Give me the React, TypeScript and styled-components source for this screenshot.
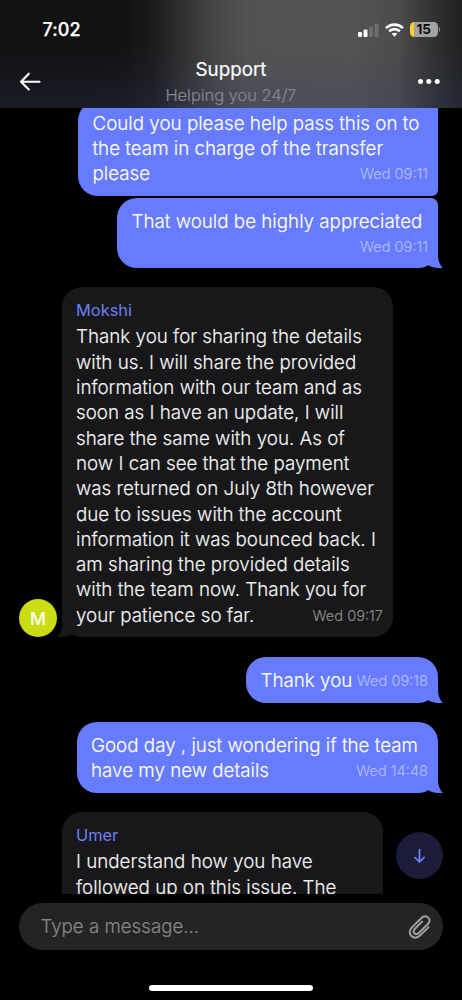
import React from "react";
import styled, { createGlobalStyle, css } from "styled-components";

const Global = createGlobalStyle`
  * { box-sizing: border-box; }
  html, body { margin: 0; background: #000; }
  body { font-family: Inter, "Liberation Sans", sans-serif; overflow: hidden; }
`;

const Screen = styled.main`
  width: 462px;
  height: 1000px;
  background: #000;
  color: #fff;
  display: flex;
  flex-direction: column;
  overflow: hidden;
`;

const Header = styled.header`
  flex: none;
  height: 108px;
  background:
    linear-gradient(180deg, rgba(50, 62, 110, 0) 45%, rgba(50, 62, 110, 0.24) 100%),
    linear-gradient(90deg, #111112 0%, #121213 26%, #1b1b1c 33%, #323232 40%, #484848 47%, #525252 54%, #535353 76%, #4c4c4c 86%, #303132 94%, #202122 100%);
`;

const StatusBar = styled.div`
  height: 58px;
  padding: 1px 22px 0 42.5px;
  display: flex;
  align-items: center;
  justify-content: space-between;
`;

const Clock = styled.span`
  font-size: 18px;
  font-weight: 500;
  -webkit-text-stroke: 0.25px currentColor;
  line-height: 22px;
  letter-spacing: 0.1px;
`;

const StatusIcons = styled.div`
  display: flex;
  align-items: center;
  gap: 6.2px;
  svg { display: block; }
`;

const Battery = styled.div`
  display: flex;
  align-items: center;
  gap: 1px;
  &::after {
    content: "";
    width: 1.5px;
    height: 5px;
    border-radius: 0 2px 2px 0;
    background: #8c8c8c;
  }
`;

const BatteryBody = styled.div`
  width: 27.5px;
  height: 15px;
  border-radius: 4.5px;
  background: linear-gradient(90deg, #fbd02c 0 4.5px, #a3a3a3 4.5px);
  color: #0b0b0b;
  font-size: 13.5px;
  font-weight: 700;
  line-height: 15.5px;
  text-align: center;
`;

const NavBar = styled.div`
  height: 50px;
  padding: 0 22px 0 19px;
  display: grid;
  grid-template-columns: 24px 1fr 24px;
  svg { display: block; margin-top: 12px; }
`;

const Titles = styled.div`
  text-align: center;
  padding-left: 3px;
`;

const Title = styled.h1`
  margin: 0;
  font-size: 18.8px;
  font-weight: 400;
  -webkit-text-stroke: 0.2px currentColor;
  line-height: 24px;
`;

const Subtitle = styled.p`
  margin: 1px 0 0;
  font-size: 16.5px;
  font-weight: 300;
  -webkit-text-stroke: 0.2px currentColor;
  line-height: 24px;
  letter-spacing: -0.05px;
  color: #85868c;
`;

const Thread = styled.section`
  flex: none;
  height: 785.5px;
  overflow: hidden;
  padding: 0 24px 0 19px;
  display: flex;
  flex-direction: column;
`;

const Row = styled.div<{ $mine?: boolean; $gap: number }>`
  flex: none;
  display: flex;
  align-items: flex-end;
  justify-content: ${(p) => (p.$mine ? "flex-end" : "flex-start")};
  margin-top: ${(p) => p.$gap}px;
`;

const AvatarSlot = styled.div`
  width: 43px;
  flex: none;
`;

const Avatar = styled.div`
  width: 38px;
  height: 38px;
  border-radius: 50%;
  background: #cbdc12;
  font-size: 17.5px;
  font-weight: 500;
  line-height: 39px;
  text-align: center;
`;

const Bubble = styled.div<{ $mine?: boolean; $w: number; $h: number; $radius: string; $top?: number }>`
  position: relative;
  isolation: isolate;
  width: ${(p) => p.$w}px;
  height: ${(p) => p.$h}px;
  border-radius: ${(p) => p.$radius};
  padding: ${(p) => p.$top ?? 11}px 10px 0 14.5px;
  font-size: 18.8px;
  font-weight: 300;
  -webkit-text-stroke: 0.15px currentColor;
  line-height: 25.3px;
  white-space: nowrap;
  ${(p) =>
    p.$mine
      ? css`background: #677bff; color: #fff;`
      : css`background: #18181a; color: #f4f4f4; padding-left: 14px;`}
`;

const Author = styled.div`
  height: 26px;
  font-size: 16.4px;
  font-weight: 400;
  -webkit-text-stroke: 0;
  line-height: 25px;
  color: #6c7ff2;
`;

const Line = styled.div`
  display: flex;
  justify-content: space-between;
  height: 25.3px;
`;

const Time = styled.time<{ $mine?: boolean }>`
  margin-left: auto;
  font-size: 14.6px;
  font-weight: 300;
  line-height: 26px;
  color: ${(p) => (p.$mine ? "#b1bbff" : "#8c8c8e")};
`;

const TailShape = styled.svg<{ $mine?: boolean }>`
  position: absolute;
  z-index: -1;
  bottom: 0;
  ${(p) => (p.$mine ? "right: -5px;" : "left: -5px; transform: scaleX(-1);")}
`;

function Tail({ mine }: { mine?: boolean }) {
  return (
    <TailShape $mine={mine} width="26" height="20" viewBox="0 0 26 20">
      <path
        d="M21 0V6C21 12 22.500 17 26 19.900C20 20.300 15.500 19.800 11.500 17.300L8 8L12 0Z"
        fill={mine ? "#677bff" : "#18181a"}
      />
    </TailShape>
  );
}

const Composer = styled.footer`
  flex: none;
  margin: 9.5px 19px 0;
  height: 47px;
  border-radius: 24px;
  background: #242424;
  padding: 0 12px 0 21.5px;
  display: flex;
  align-items: center;
  justify-content: space-between;
`;

const Placeholder = styled.span`
  padding-top: 1px;
  font-size: 18.7px;
  font-weight: 300;
  -webkit-text-stroke: 0.2px currentColor;
  line-height: 24px;
  color: #858585;
`;

const ScrollDown = styled.button`
  position: absolute;
  left: 396px;
  top: 832px;
  width: 47px;
  height: 47px;
  border: 0;
  padding: 0;
  border-radius: 50%;
  background: #1b1c3a;
  display: grid;
  place-items: center;
`;

const HomeIndicator = styled.div`
  flex: none;
  width: 164px;
  height: 6px;
  margin: 34.5px auto 0;
  border-radius: 3px;
  background: #fff;
`;

type Message = {
  gap: number;
  w: number;
  h: number;
  radius: string;
  top?: number;
  mine?: boolean;
  author?: string;
  initial?: string;
  tail?: boolean;
  lines: string[];
  time?: string;
};

const messages: Message[] = [
  { gap: -7, w: 360, h: 94.5, radius: "20px 6px 6px 20px", top: 9.5, mine: true, time: "Wed 09:11",
    lines: ["Could you please help pass this on to", "the team in charge of the transfer", "please"] },
  { gap: 2.5, w: 321, h: 69.7, radius: "20px 7px 20px 20px", mine: true, tail: true, time: "Wed 09:11",
    lines: ["That would be highly appreciated", ""] },
  { gap: 19.3, w: 331, h: 350.5, radius: "20px", top: 11.5, tail: true, author: "Mokshi", initial: "M", time: "Wed 09:17",
    lines: [
      "Thank you for sharing the details", "with us. I will share the provided",
      "information with our team and as", "soon as I have an update, I will",
      "share the same with you. As of", "now I can see that the payment",
      "was returned on July 8th however", "due to issues with the account",
      "information it was bounced back. I", "am sharing the provided details",
      "with the team now. Thank you for", "your patience so far.",
    ] },
  { gap: 19.5, w: 192, h: 46, radius: "20px", mine: true, tail: true, time: "Wed 09:18",
    lines: ["Thank you"] },
  { gap: 19, w: 361.5, h: 71, radius: "20px", mine: true, tail: true, time: "Wed 14:48",
    lines: ["Good day , just wondering if the team", "have my new details"] },
  { gap: 19, w: 321, h: 120, radius: "20px 20px 0 0", top: 11.5, author: "Umer",
    lines: ["I understand how you have", "followed up on this issue. The"] },
];

export default function App() {
  return (
    <Screen>
      <Global />
      <Header>
        <StatusBar>
          <Clock>7:02</Clock>
          <StatusIcons>
            <svg width="21" height="14" viewBox="0 0 21 14">
              <rect x="0" y="9" width="4" height="5" rx="1.2" fill="#fff" />
              <rect x="5.500" y="6.500" width="4" height="7.500" rx="1.200" fill="#fff" />
              <rect x="11" y="3.500" width="4" height="10.500" rx="1.200" fill="#6e6e6e" />
              <rect x="16.500" y="0.500" width="4" height="13.500" rx="1.200" fill="#6e6e6e" />
            </svg>
            <svg width="19" height="14" viewBox="0 0 19 14" fill="none" stroke="#fff" strokeWidth="2.600">
              <path d="M1 5.100C5.800 .500 13.200 .500 18 5.100" />
              <path d="M4.100 8.300C7.200 5.400 11.800 5.400 14.900 8.300" />
              <path d="M6.700 10.800C8.300 9.300 10.700 9.300 12.300 10.800L9.500 13.700Z" fill="#fff" stroke="none" />
            </svg>
            <Battery><BatteryBody>15</BatteryBody></Battery>
          </StatusIcons>
        </StatusBar>
        <NavBar>
          <svg width="24" height="24" viewBox="0 0 24 24" fill="none" stroke="#fff" strokeWidth="2.100" strokeLinecap="round" strokeLinejoin="round">
            <path d="M20.500 11.700H2M9.800 3.700L2 11.700L9.800 19.500" />
          </svg>
          <Titles>
            <Title>Support</Title>
            <Subtitle>Helping you 24/7</Subtitle>
          </Titles>
          <svg width="24" height="24" viewBox="0 0 24 24" fill="#fff">
            <circle cx="4.500" cy="11.500" r="2.500" />
            <circle cx="12.800" cy="11.500" r="2.500" />
            <circle cx="21.200" cy="11.500" r="2.500" />
          </svg>
        </NavBar>
      </Header>
      <Thread>
        {messages.map((m, i) => (
          <Row key={i} $mine={m.mine} $gap={m.gap}>
            {!m.mine && <AvatarSlot>{m.initial && <Avatar>{m.initial}</Avatar>}</AvatarSlot>}
            <Bubble $mine={m.mine} $w={m.w} $h={m.h} $radius={m.radius} $top={m.top}>
              {m.author && <Author>{m.author}</Author>}
              {m.lines.map((line, n) => (
                <Line key={n}>
                  <span>{line}</span>
                  {m.time && n === m.lines.length - 1 && <Time $mine={m.mine}>{m.time}</Time>}
                </Line>
              ))}
              {m.tail && <Tail mine={m.mine} />}
            </Bubble>
          </Row>
        ))}
      </Thread>
      <Composer>
        <Placeholder>Type a message...</Placeholder>
        <svg width="23" height="24" viewBox="0.500 1 24 25" fill="none" stroke="#a0a0a0" strokeWidth="2.100" strokeLinecap="round" strokeLinejoin="round">
          <path d="M22 13.600L13.500 21.900C10.200 25.200 6.700 25.300 4.100 22.800C1.600 20.300 1.800 16.700 4.900 13.600L14.300 4.300C16.700 1.900 19.700 1.800 21.600 3.700C23.500 5.600 23.300 8.300 20.900 10.700L12 19.500C10.300 21.200 8.500 21.300 7.200 20C5.900 18.700 6.100 17 7.700 15.400L15.300 7.900" />
        </svg>
      </Composer>
      <HomeIndicator />
      <ScrollDown aria-label="Scroll to latest">
        <svg width="14" height="16" viewBox="0 0 14 16" fill="none" stroke="#7485f5" strokeWidth="1.700" strokeLinecap="round" strokeLinejoin="round">
          <path d="M6.500 1.500V14M1.900 9.500L6.500 14L11.100 9.500" />
        </svg>
      </ScrollDown>
    </Screen>
  );
}
